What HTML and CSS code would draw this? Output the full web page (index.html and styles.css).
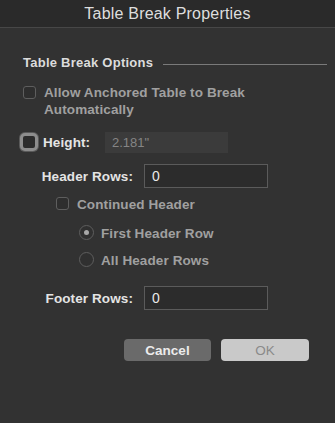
FILE: index.html
```html
<!DOCTYPE html>
<html>
<head>
<meta charset="utf-8">
<link rel="stylesheet" href="styles.css">
</head>
<body>
<div class="window">
  <div class="titlebar">Table Break Properties</div>
  <div class="content">
    <div class="section-head">
      <span class="section-title">Table Break Options</span>
      <span class="section-rule"></span>
    </div>

    <div class="check-row allow">
      <span class="checkbox"></span>
      <span class="dim-text">Allow Anchored Table to Break<br>Automatically</span>
    </div>

    <div class="height-row">
      <span class="checkbox focused"></span>
      <span class="label strong">Height:</span>
      <span class="field disabled">2.181"</span>
    </div>

    <div class="field-row header-rows">
      <span class="label strong">Header Rows:</span>
      <span class="field">0</span>
    </div>

    <div class="check-row continued">
      <span class="checkbox"></span>
      <span class="dim-text">Continued Header</span>
    </div>

    <div class="radio-row first">
      <span class="radio checked"></span>
      <span class="dim-text">First Header Row</span>
    </div>

    <div class="radio-row all">
      <span class="radio"></span>
      <span class="dim-text">All Header Rows</span>
    </div>

    <div class="field-row footer-rows">
      <span class="label">Footer Rows:</span>
      <span class="field">0</span>
    </div>

    <div class="buttons">
      <span class="btn cancel">Cancel</span>
      <span class="btn ok">OK</span>
    </div>
  </div>
</div>
</body>
</html>
```

FILE: styles.css
```css
* { box-sizing: border-box; }
html, body {
  margin: 0;
  padding: 0;
  background: #323232;
}
body {
  width: 335px;
  height: 423px;
  overflow: hidden;
  font-family: "Liberation Sans", Arial, sans-serif;
  color: #d6d6d6;
}
.window {
  width: 335px;
  height: 423px;
  background: #323232;
  display: flex;
  flex-direction: column;
}
.titlebar {
  height: 28px;
  background: #2a2a2a;
  border-bottom: 1px solid #474747;
  color: #dedede;
  font-size: 16px;
  line-height: 27px;
  text-align: center;
  letter-spacing: 0.2px;
}
.content {
  display: flex;
  flex-direction: column;
  padding: 26px 0 0 0;
  font-size: 13px;
}
.section-head {
  display: flex;
  align-items: center;
  padding-left: 23px;
  padding-right: 8px;
  height: 16px;
}
.section-title {
  color: #dcdcdc;
  font-size: 13px;
  font-weight: bold;
  letter-spacing: 0.25px;
}
.section-rule {
  flex: 1;
  height: 1px;
  background: #7a7a7a;
  margin-left: 10px;
  margin-top: 4px;
}
.check-row, .radio-row {
  display: flex;
  align-items: flex-start;
  line-height: 17px;
}
.dim-text {
  color: #a0a0a0;
  font-size: 13.5px;
  font-weight: bold;
  letter-spacing: 0.1px;
}
.checkbox {
  width: 13px;
  height: 13px;
  border: 1px solid #5e5e5e;
  border-radius: 3px;
  background: #2e2e2e;
  flex: none;
  margin-top: 2px;
}
.allow {
  margin-top: 14px;
  padding-left: 23px;
}
.allow .checkbox { margin-right: 8px; }
.height-row {
  display: flex;
  align-items: center;
  margin-top: 13px;
  padding-left: 20px;
  height: 22px;
}
.checkbox.focused {
  width: 18px;
  height: 18px;
  border: 3px solid #8d8d8d;
  border-radius: 5px;
  background: #2c2c2c;
  margin-top: 0;
  margin-right: 5px;
  box-shadow: 0 0 0 1px #5a5a5a;
}
.label {
  color: #e4e4e4;
  font-size: 13.5px;
  font-weight: bold;
  letter-spacing: 0.1px;
}
.height-row .label { width: 62px; }
.field {
  display: flex;
  align-items: center;
  height: 24px;
  width: 124px;
  padding-left: 7px;
  background: #2c2c2c;
  border: 1px solid #5b5b5b;
  color: #eaeaea;
  font-size: 14px;
}
.field.disabled {
  height: 21px;
  width: 123px;
  background: #3b3b3b;
  border: none;
  color: #858585;
  font-size: 13px;
}
.field-row {
  display: grid;
  grid-template-columns: 133px 124px;
  column-gap: 11px;
  align-items: center;
}
.field-row .label { text-align: right; }
.header-rows { margin-top: 11px; }
.footer-rows { margin-top: 18px; }
.continued {
  margin-top: 8px;
  padding-left: 56px;
}
.continued .checkbox { margin-right: 8px; margin-top: 1px; }
.radio-row { height: 16px; }
.first { margin-top: 12px; padding-left: 79px; }
.all { margin-top: 11px; padding-left: 79px; }
.radio {
  width: 15px;
  height: 15px;
  border: 1px solid #5e5e5e;
  border-radius: 50%;
  background: #303030;
  flex: none;
  margin-right: 7px;
  margin-top: 0;
  display: flex;
  align-items: center;
  justify-content: center;
}
.radio.checked::after {
  content: "";
  width: 5px;
  height: 5px;
  border-radius: 50%;
  background: #a8a8a8;
}
.buttons {
  display: flex;
  gap: 10px;
  margin-top: 29px;
  padding-left: 124px;
}
.btn {
  height: 22px;
  width: 87px;
  border-radius: 4px;
  display: flex;
  align-items: center;
  justify-content: center;
  font-size: 13.5px;
}
.cancel {
  background: #6a6a6a;
  color: #ececec;
  font-weight: bold;
}
.ok {
  width: 88px;
  background: #c9c9c9;
  color: #8a8a8a;
}
```
